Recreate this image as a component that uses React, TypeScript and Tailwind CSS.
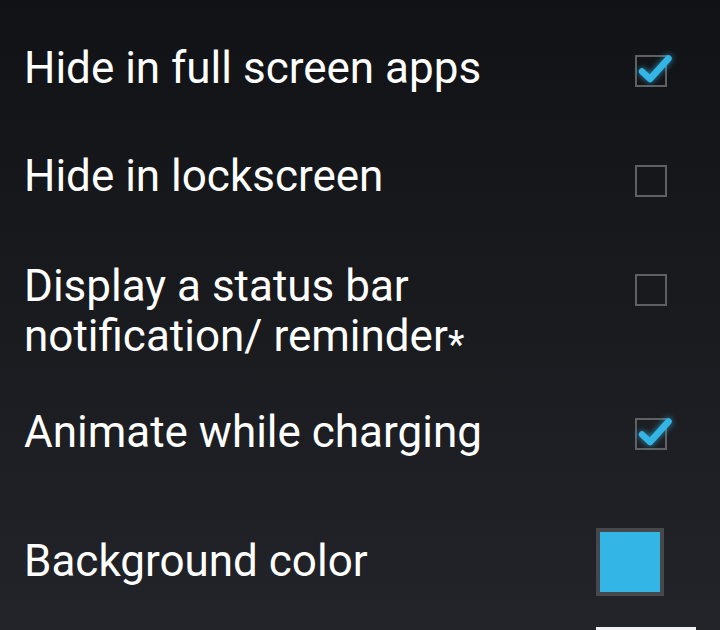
import React from 'react';

function CheckBox({ checked }: { checked: boolean }) {
  return (
    <div className="relative w-[32px] h-[32px] shrink-0">
      <div className="absolute inset-0 border-2 border-[#5f6062]" />
      {checked && (
        <svg
          className="absolute left-0 top-0 overflow-visible"
          width="32"
          height="32"
          viewBox="0 0 32 32"
          style={{ filter: 'drop-shadow(0 0 3px rgba(51,181,229,0.8))' }}
        >
          <path
            d="M7 16.5 L15 24 L33.5 3.5"
            fill="none"
            stroke="#33b5e5"
            strokeWidth="6.5"
            strokeLinecap="round"
            strokeLinejoin="round"
          />
        </svg>
      )}
    </div>
  );
}

function Swatch() {
  return (
    <div className="w-[68px] h-[68px] border-4 border-[#46484b] bg-[#33b5e5] shrink-0" />
  );
}

export default function App() {
  return (
    <div
      className="w-[720px] h-[630px] overflow-hidden bg-gradient-to-b from-[#111215] to-[#222429] text-white pl-[24px]"
      style={{ fontFamily: 'Roboto, "Noto Sans", sans-serif' }}
    >
      {/* Hide in full screen apps */}
      <div className="flex items-start justify-between pt-[43px] pr-[53px]">
        <p className="text-[44px] leading-[50px]">Hide in full screen apps</p>
        <div className="mt-[12px]">
          <CheckBox checked />
        </div>
      </div>

      {/* Hide in lockscreen */}
      <div className="flex items-start justify-between mt-[58px] pr-[53px]">
        <p className="text-[44px] leading-[50px]">Hide in lockscreen</p>
        <div className="mt-[14px]">
          <CheckBox checked={false} />
        </div>
      </div>

      {/* Status bar notification */}
      <div className="flex items-start justify-between mt-[60px] pr-[53px]">
        <p className="text-[44px] leading-[50px]">
          Display a status bar
          <br />
          notification/ reminder<span className="relative top-[7px] text-[38px] leading-[0]">*</span>
        </p>
        <div className="mt-[13px]">
          <CheckBox checked={false} />
        </div>
      </div>

      {/* Animate while charging */}
      <div className="flex items-start justify-between mt-[46px] pr-[53px]">
        <p className="text-[44px] leading-[50px]">Animate while charging</p>
        <div className="mt-[11px]">
          <CheckBox checked />
        </div>
      </div>

      {/* Background color */}
      <div className="flex items-start justify-between mt-[79px] pr-[56px]">
        <p className="text-[44px] leading-[50px]">Background color</p>
        <div className="-mt-[8px]">
          <Swatch />
        </div>
      </div>

      {/* next swatch peeking in at the bottom */}
      <div className="flex justify-end pr-[24px] mt-[31px]">
        <div className="w-[100px] h-[60px] bg-[#f2f2f2]" />
      </div>
    </div>
  );
}
